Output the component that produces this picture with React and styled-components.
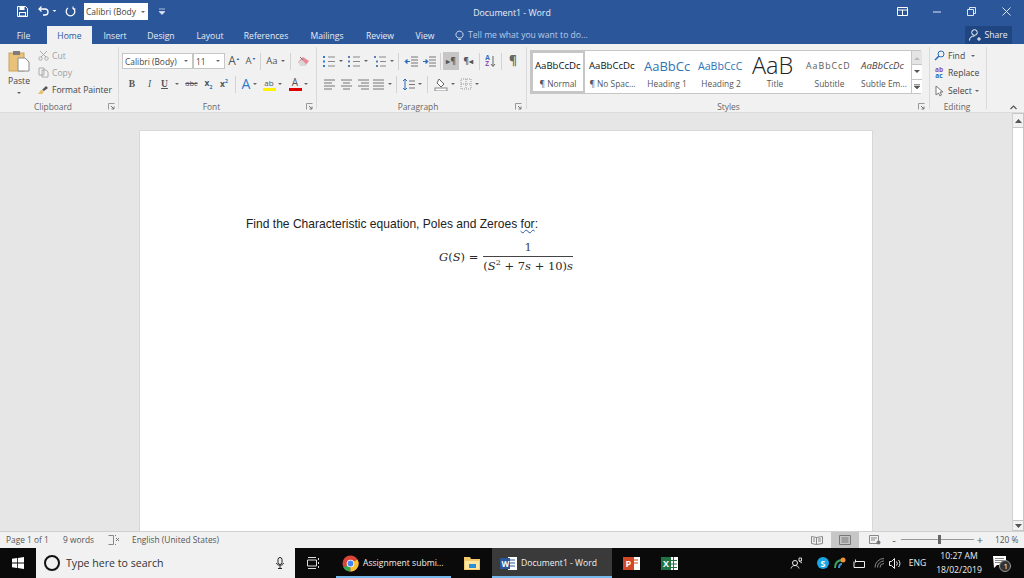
import React from "react";
import styled, { createGlobalStyle } from "styled-components";

const Global = createGlobalStyle`
  html, body { margin: 0; padding: 0; height: 100%; overflow: hidden; }
  body { font-family: "Open Sans", "Noto Sans", sans-serif; color: #444; }
  svg { display: block; }
`;

const Screen = styled.div`width: 1024px; height: 578px; display: flex; flex-direction: column; overflow: hidden; background: #e6e6e6;`;
const Header = styled.header`height: 44px; background: #2b579a; color: #fff; display: flex; flex-direction: column; flex: none;`;
const TitleRow = styled.div`height: 22px; display: flex; align-items: center; position: relative;`;
const QatSlot = styled.div`width: ${p => p.$w}px; display: flex; justify-content: center; align-items: center; flex: none;`;
const QatFont = styled.div`width: 64px; height: 17px; margin-top: 1px; background: #fff; color: #444; font-size: 8.5px; display: flex; align-items: center; justify-content: space-between; padding: 0 3px 0 2px; box-sizing: border-box; white-space: nowrap;`;
const DocTitle = styled.div`flex: 1; text-align: center; font-size: 8.8px; color: #e8eef7; margin-left: -37px; padding-top: 3px;`;
const WinControls = styled.div`display: flex; flex: none; width: 139px;`;
const WinBtn = styled.div`width: 35px; display: flex; justify-content: center;`;
const TabRow = styled.nav`height: 22px; display: flex; align-items: flex-end;`;
const Tab = styled.div`
  width: ${p => p.$w}px; height: 18px; flex: none; display: flex; align-items: center; justify-content: center;
  font-size: 8.6px; box-sizing: border-box; padding-top: 1px;
  background: ${p => p.$active ? "#f1f1f1" : "transparent"};
  color: ${p => p.$active ? "#2b579a" : "#e6ecf5"};
`;
const TellMe = styled.div`margin-left: 7px; height: 18px; display: flex; align-items: center; gap: 4px; font-size: 8.6px; color: #b9cce6; flex: 1;`;
const Share = styled.div`width: 47px; height: 18px; margin-right: 12px; background: #1f4680; display: flex; align-items: center; justify-content: center; gap: 3px; font-size: 8.6px; color: #e8eef7; flex: none;`;

const Ribbon = styled.section`height: 69px; background: #f1f1f1; display: flex; border-bottom: 1px solid #dcdcdc; box-sizing: border-box; flex: none;`;
const Group = styled.div`
  width: ${p => p.$w}px; flex: none; box-sizing: border-box; display: flex; flex-direction: column; position: relative;
  padding-left: ${p => p.$pl || 0}px;
  &::after { content: ""; position: absolute; right: 0; top: 3px; bottom: 3px; width: 1px; background: #dadada; }
`;
const GroupBody = styled.div`height: ${p => p.$h ?? 55}px; display: flex; flex-direction: column; flex: none;`;
const GroupLabel = styled.div`flex: 1; display: flex; align-items: center; justify-content: center; font-size: 8.4px; color: #666; margin-top: 1px; padding-right: ${p => p.$pr || 0}px;`;
const Launcher = styled.div`position: absolute; right: ${p => p.$r ?? 4}px; bottom: 2px;`;

const ClipRow = styled.div`display: flex; height: 55px;`;
const PasteCol = styled.div`width: 37px; flex: none; display: flex; flex-direction: column; align-items: center; padding-top: 6px; box-sizing: border-box; font-size: 8.6px; color: #444; padding-left: 1px;`;
const PasteLabel = styled.div`margin: 4px 0 5px; line-height: 11px;`;
const SmallCol = styled.div`display: flex; flex-direction: column; padding-top: 3px;`;
const SmallBtn = styled.div`height: 17.5px; display: flex; align-items: center; gap: 3px; font-size: 8.6px; white-space: nowrap; color: ${p => p.$dim ? "#a0a0a0" : "#444"};`;
const IconBox = styled.span`width: ${p => p.$w || 12}px; display: flex; justify-content: center; flex: none;`;

const ToolRow = styled.div`display: flex; align-items: center; height: ${p => p.$h}px; margin-top: ${p => p.$mt || 0}px;`;
const Slot = styled.div`
  width: ${p => p.$w}px; height: 18px; flex: none; display: flex; align-items: center; justify-content: center;
  background: ${p => p.$on ? "#c6c6c6" : "transparent"}; font-size: 9px; color: #444;
`;
const Divider = styled.div`width: 1px; height: 17px; background: #d2d2d2; flex: none; margin: 0 ${p => p.$m ?? 2}px;`;
const Caret = styled.span`width: 0; height: 0; border: 2px solid transparent; border-top: 2.5px solid #666; border-bottom: 0; display: inline-block; margin-left: ${p => p.$ml ?? 3}px; flex: none;`;
const Combo = styled.div`
  width: ${p => p.$w}px; height: 16px; background: #fff; border: 1px solid #c6c6c6; box-sizing: border-box; flex: none;
  display: flex; align-items: center; justify-content: space-between; padding: 0 4px 0 2px; font-size: 8.4px; color: #444; white-space: nowrap;
`;
const Letter = styled.span`
  font-family: "Liberation Serif", serif; font-size: ${p => p.$fs || 10}px;
  font-weight: ${p => p.$b ? 700 : 400}; font-style: ${p => p.$i ? "italic" : "normal"};
  text-decoration: ${p => p.$u ? "underline" : "none"}; color: #555;
`;
const Sans = styled.span`font-size: ${p => p.$fs || 9}px; font-weight: ${p => p.$b ? 700 : 400}; color: ${p => p.$c || "#555"}; text-decoration: ${p => p.$s ? "line-through" : "none"}; line-height: 1; white-space: nowrap;`;
const SubMark = styled.sub`font-size: 5px; color: #2b6cb8;`;
const SupMark = styled.sup`font-size: 5px; color: #2b6cb8;`;
const Swatched = styled.span`display: flex; flex-direction: column; align-items: center; width: 14px; flex: none; font-size: ${p => p.$fs}px; line-height: 9px; height: 13px; color: #555; overflow: visible;`;
const Swatch = styled.i`display: block; width: 13px; height: 3px; margin-top: 1px; background: ${p => p.$c}; flex: none;`;
const Stack = styled.span`display: flex; flex-direction: column; line-height: 6px; font-size: ${p => p.$fs}px; font-weight: 700; height: 12px; align-items: ${p => p.$align || "flex-start"}; flex: none;`;
const StackA = styled.span`color: ${p => p.$c}; height: 6px; line-height: 6px;`;

const Gallery = styled.div`margin: 6px 0 0 1px; width: 391px; height: 44px; display: flex; box-sizing: border-box; border: 1px solid #c6c6c6; background: #fff; flex: none;`;
const StyleItem = styled.div`
  width: ${p => p.$w}px; flex: none; box-sizing: border-box; overflow: hidden; display: flex; flex-direction: column; align-items: center;
  border: ${p => p.$sel ? "2.5px solid #c6c6c6" : "2.5px solid transparent"};
`;
const StylePreview = styled.div`
  height: 24px; width: 100%; overflow: hidden; display: flex; align-items: center; justify-content: flex-start; white-space: nowrap; box-sizing: border-box; padding: 2px 0 0 2px;
  font-family: "Open Sans", sans-serif; font-size: ${p => p.$fs}px; color: ${p => p.$c}; font-style: ${p => p.$i ? "italic" : "normal"};
  font-weight: ${p => p.$light ? 300 : 400}; letter-spacing: ${p => p.$ls || 0}px; line-height: 1;
`;
const StyleName = styled.div`font-size: 8.4px; color: #555; white-space: nowrap; line-height: 11px; margin-top: 1px;`;
const GalleryScroll = styled.div`margin-left: auto; width: 10px; flex: none; display: flex; flex-direction: column; border-left: 1px solid #c6c6c6;`;
const ScrollCell = styled.div`flex: 1; display: flex; align-items: center; justify-content: center; background: ${p => p.$dim ? "#e4e4e4" : "#fff"}; & + & { border-top: 1px solid #c6c6c6; }`;

const Collapse = styled.div`flex: 1; position: relative;`;
const CollapseIcon = styled.div`position: absolute; right: 7px; bottom: 2px;`;

const Work = styled.main`flex: 1; min-height: 0; display: flex; background: #e6e6e6;`;
const Canvas = styled.div`flex: 1; display: flex; padding: 17px 0 0 139px; box-sizing: border-box; overflow: hidden;`;
const Page = styled.article`width: 734px; height: 420px; background: #fff; border: 1px solid #d8d8d8; box-sizing: border-box; padding: 86px 106px 0; flex: none;`;
const DocLine = styled.p`margin: 0; font-family: "Liberation Sans", Arial, sans-serif; font-size: 12.05px; line-height: 15px; color: #222; white-space: nowrap;`;
const Squiggle = styled.span`text-decoration: underline wavy #2b579a 0.7px; text-underline-offset: 1px;`;
const Equation = styled.div`display: flex; justify-content: center; align-items: center; gap: 5px; margin-top: 8px; font-family: "DejaVu Serif", serif; font-size: 11.5px; color: #2a2a2a;`;
const Frac = styled.div`display: flex; flex-direction: column; align-items: center;`;
const Num = styled.div`height: 16px; width: 100%; text-align: center; border-bottom: 1px solid #444; line-height: 14px; margin-bottom: 2px; font-size: 11.5px; color: #444; box-sizing: content-box;`;
const Den = styled.div`line-height: 15px; white-space: nowrap;`;
const MathI = styled.i`font-style: italic;`;
const Sup = styled.sup`font-size: 8px; line-height: 0;`;

const Scrollbar = styled.aside`width: 12px; flex: none; display: flex; flex-direction: column; background: #f1f1f1; border-left: 1px solid #d0d0d0; box-sizing: border-box;`;
const ScrollBtn = styled.div`height: ${p => p.$h}px; flex: none; display: flex; align-items: center; justify-content: center; background: #f1f1f1; border: 1px solid #c6c6c6; border-left: 0; box-sizing: border-box;`;
const ScrollThumb = styled.div`flex: 1; background: #fff; border-right: 1px solid #c6c6c6; box-sizing: border-box;`;

const Status = styled.footer`height: 17px; flex: none; background: #f1f1f1; border-top: 1px solid #d0d0d0; box-sizing: border-box; display: flex; align-items: center; font-size: 8.4px; color: #555; padding: 0 0 1px 6px; white-space: nowrap;`;
const StatusText = styled.span`width: ${p => p.$w}px; flex: none;`;
const StatusSpacer = styled.div`flex: 1;`;
const ViewBtn = styled.div`width: ${p => p.$w}px; height: 16px; flex: none; display: flex; align-items: center; justify-content: center; background: ${p => p.$on ? "#c6c6c6" : "transparent"};`;
const Zoomer = styled.div`width: 73px; height: 1px; background: #999; position: relative; margin: 0 2px 0 3px; flex: none;`;
const ZoomThumb = styled.div`position: absolute; left: 37px; top: -4px; width: 3px; height: 9px; background: #666;`;
const ZoomSign = styled.span`font-size: 11px; color: #555; line-height: 1; width: 8px; text-align: center; flex: none;`;
const ZoomPct = styled.span`width: 29px; margin-left: 11px; flex: none;`;

const Taskbar = styled.footer`height: 30px; flex: none; background: #0a0a0a; display: flex; align-items: stretch; color: #fff; padding-right: 7px;`;
const StartBtn = styled.div`width: 36px; flex: none; display: flex; align-items: center; justify-content: center;`;
const Search = styled.div`width: 259px; flex: none; background: #f1f1f1; display: flex; align-items: center; padding: 0 11px 0 8px; box-sizing: border-box; color: #333; font-family: "Open Sans", sans-serif; font-size: 10.6px; gap: 6px;`;
const Ring = styled.span`width: 16px; height: 16px; border-radius: 50%; border: 2.5px solid #111; box-sizing: border-box; flex: none;`;
const SearchText = styled.span`flex: 1;`;
const TaskIcon = styled.div`width: ${p => p.$w}px; flex: none; display: flex; align-items: center; justify-content: center; box-sizing: border-box;`;
const TaskApp = styled.div`
  width: ${p => p.$w}px; flex: none; display: flex; align-items: center; gap: 4px; box-sizing: border-box; padding-left: ${p => p.$pl || 5}px;
  font-size: 8.6px; color: #f0f0f0; white-space: nowrap; position: relative; margin-left: ${p => p.$ml || 0}px;
  background: ${p => p.$active ? "#3a3a3a" : "transparent"};
  &::after { content: ""; position: absolute; left: 0; right: 0; bottom: 0; height: 2px; background: #76b9ed; }
`;
const TaskSpacer = styled.div`flex: 1;`;
const Lang = styled.div`width: 27px; flex: none; display: flex; align-items: center; justify-content: center; font-size: 8.6px; color: #eee;`;
const Clock = styled.div`width: 56px; flex: none; display: flex; flex-direction: column; align-items: center; justify-content: center; font-size: 8.6px; line-height: 14px; color: #eee; white-space: nowrap;`;

const S = ({ w = 12, h = 12, vb, children }) => <svg width={w} height={h} viewBox={vb || `0 0 ${w} ${h}`} fill="none">{children}</svg>;
const Launch = () => <S w={7} h={7}><path d="M.5.5h6M.5.5v6" stroke="#999" /><path d="M3 3l3 3M6 3.5V6H3.5" stroke="#777" /></S>;
const Lines = ({ a = ["1 2 12 2", "1 5 9 5", "1 8 12 8", "1 11 9 11"], c = "#777" }) => (
  <S w={13} h={12}>{a.map((l, i) => { const [x1, y1, x2, y2] = l.split(" "); return <line key={i} x1={x1} y1={y1} x2={x2} y2={y2} stroke={c} />; })}</S>
);
const ListIcon = ({ kind }) => (
  <S w={14} h={13}>
    {[2, 6.5, 11].map((y, i) => <React.Fragment key={y}>
      <rect x={kind === 2 && i ? 3 : 1} y={y - 1} width="2" height="2" fill={kind === 1 ? "#2b7cd3" : "#5a7fb0"} />
      <line x1={kind === 2 && i ? 7 : 6} y1={y} x2="13" y2={y} stroke="#888" />
    </React.Fragment>)}
  </S>
);
const Indent = ({ dir }) => (
  <S w={15} h={11}>
    <path d="M7 1h7M7 4h7M7 7h7M7 10h7" stroke="#777" />
    {dir ? <path d="M1 5.5h3M4 3.5l2 2-2 2z" stroke="#2b6cb8" fill="#2b6cb8" /> : <path d="M6 5.5H3M3 3.5l-2 2 2 2z" stroke="#2b6cb8" fill="#2b6cb8" />}
  </S>
);

function Ribbons() {
  return (
    <Ribbon>
      <Group $w={119}>
        <GroupBody>
          <ClipRow>
            <PasteCol>
              <S w={22} h={22}>
                <rect x="1" y="3" width="15" height="18" fill="#e9c27a" stroke="#c9a25c" />
                <rect x="5" y="1" width="7" height="4" fill="#7c7c7c" />
                <path d="M10 8h7l4 4v9H10z" fill="#fff" stroke="#8c8c8c" />
              </S>
              <PasteLabel>Paste</PasteLabel>
              <Caret $ml={0} />
            </PasteCol>
            <SmallCol>
              <SmallBtn $dim><IconBox><S w={11} h={11}><path d="M2 1l6 6M9 1L3 7" stroke="#aaa" /><circle cx="2.5" cy="8.5" r="1.7" stroke="#aaa" /><circle cx="8.5" cy="8.5" r="1.7" stroke="#aaa" /></S></IconBox>Cut</SmallBtn>
              <SmallBtn $dim><IconBox><S w={11} h={11}><path d="M1 1h5v7H1zM4 3h4l2 2v5H4z" stroke="#aaa" fill="#f5f5f5" /></S></IconBox>Copy</SmallBtn>
              <SmallBtn><IconBox><S w={12} h={10}><path d="M1 9l3-4 3 2-2 2z" fill="#e8c06a" /><path d="M5 5l4-4 2 2-4 3z" fill="#555" /></S></IconBox>Format Painter</SmallBtn>
            </SmallCol>
          </ClipRow>
        </GroupBody>
        <GroupLabel $pr={13}>Clipboard</GroupLabel>
        <Launcher><Launch /></Launcher>
      </Group>

      <Group $w={198} $pl={3}>
        <GroupBody>
          <ToolRow $h={18} $mt={8}>
            <Combo $w={71}>Calibri (Body)<Caret /></Combo>
            <Combo $w={32}>11<Caret /></Combo>
            <Slot $w={18}><Sans $fs={12}>A</Sans><S w={4} h={8}><path d="M.5 3L2 1l1.5 2z" fill="#2b6cb8" /></S></Slot>
            <Slot $w={15}><Sans $fs={9.5}>A</Sans><S w={4} h={8}><path d="M.5 1L2 3l1.5-2z" fill="#2b6cb8" /></S></Slot>
            <Divider />
            <Slot $w={25}><Sans $fs={9.5}>Aa</Sans><Caret /></Slot>
            <Divider />
            <Slot $w={20}><S w={13} h={12}><path d="M1 7l5-5 6 4-4 5H4z" fill="#e88a9a" /><path d="M1 7l3 4h4l1-2-4-4z" fill="#d9d9d9" /><path d="M3 2l3 3" stroke="#777" /></S></Slot>
          </ToolRow>
          <ToolRow $h={18} $mt={5}>
            <Slot $w={20}><Letter $b $fs={9.5}>B</Letter></Slot>
            <Slot $w={15}><Letter $i $fs={9.5}>I</Letter></Slot>
            <Slot $w={15}><Letter $u $b $fs={9.5}>U</Letter></Slot>
            <Slot $w={10}><Caret $ml={0} /></Slot>
            <Slot $w={19}><Sans $fs={7.5} $s>abc</Sans></Slot>
            <Slot $w={15}><Sans $fs={8.5} $b>x<SubMark>2</SubMark></Sans></Slot>
            <Slot $w={16}><Sans $fs={8.5} $b>x<SupMark>2</SupMark></Sans></Slot>
            <Divider $m={3} />
            <Slot $w={21}><Sans $fs={14} $c="#2b7cd3">A</Sans><Caret /></Slot>
            <Slot $w={1} />
            <Slot $w={22}><Swatched $fs={8}>ab<Swatch $c="#fff200" /></Swatched><Caret $ml={2} /></Slot>
            <Slot $w={4} />
            <Slot $w={22}><Swatched $fs={10}>A<Swatch $c="#e00000" /></Swatched><Caret $ml={2} /></Slot>
          </ToolRow>
        </GroupBody>
        <GroupLabel $pr={16}>Font</GroupLabel>
        <Launcher><Launch /></Launcher>
      </Group>

      <Group $w={210} $pl={4}>
        <GroupBody>
          <ToolRow $h={18} $mt={8}>
            <Slot $w={22}><ListIcon kind={1} /><Caret /></Slot>
            <Slot $w={3} />
            <Slot $w={22}><ListIcon kind={0} /><Caret /></Slot>
            <Slot $w={3} />
            <Slot $w={24}><ListIcon kind={2} /><Caret /></Slot>
            <Divider $m={3} />
            <Slot $w={18}><Indent /></Slot>
            <Slot $w={18}><Indent dir /></Slot>
            <Divider $m={2} />
            <Slot $w={16} $on><Sans $fs={8} $b>▸¶</Sans></Slot>
            <Slot $w={18}><Sans $fs={8} $b>¶◂</Sans></Slot>
            <Divider $m={2} />
            <Slot $w={17}>
              <Stack $fs={6.5}><StackA $c="#2b6cb8">A</StackA><StackA $c="#8a4fb0">Z</StackA></Stack>
              <S w={6} h={13}><path d="M3 1v10M1 9l2 2.5L5 9" stroke="#666" /></S>
            </Slot>
            <Divider $m={2} />
            <Slot $w={18}><Sans $fs={12} $b $c="#666">¶</Sans></Slot>
          </ToolRow>
          <ToolRow $h={18} $mt={5}>
            <Slot $w={17}><Lines /></Slot>
            <Slot $w={17}><Lines a={["1 2 12 2", "3 5 10 5", "1 8 12 8", "3 11 10 11"]} /></Slot>
            <Slot $w={16}><Lines a={["1 2 12 2", "4 5 12 5", "1 8 12 8", "4 11 12 11"]} /></Slot>
            <Slot $w={22}><Lines a={["1 2 12 2", "1 5 12 5", "1 8 12 8", "1 11 12 11"]} /><Caret /></Slot>
            <Divider $m={3} />
            <Slot $w={24}><S w={13} h={13}><path d="M3 1v11M1 3l2-2 2 2M1 10l2 2 2-2" stroke="#2b6cb8" /><path d="M7 3h6M7 6.5h6M7 10h6" stroke="#777" /></S><Caret /></Slot>
            <Divider $m={3} />
            <Slot $w={26}><S w={14} h={13}><path d="M5 1l5 5-3 3-4-4z" fill="#fff" stroke="#666" /><rect x="1" y="10" width="12" height="3" fill="#fff" stroke="#888" /></S><Caret /></Slot>
            <Slot $w={24}><S w={12} h={12}><path d="M1 1h10v10H1zM6 1v10M1 6h10" stroke="#999" strokeDasharray="1 1" /></S><Caret /></Slot>
          </ToolRow>
        </GroupBody>
        <GroupLabel $pr={12}>Paragraph</GroupLabel>
        <Launcher $r={5}><Launch /></Launcher>
      </Group>

      <Group $w={403} $pl={2}>
        <Gallery>
          <StyleItem $w={54} $sel>
            <StylePreview $fs={9.6} $c="#111">AaBbCcDc</StylePreview>
            <StyleName>¶ Normal</StyleName>
          </StyleItem>
          <StyleItem $w={55}>
            <StylePreview $fs={9.6} $c="#111">AaBbCcDc</StylePreview>
            <StyleName>¶ No Spac...</StyleName>
          </StyleItem>
          <StyleItem $w={54}>
            <StylePreview $fs={13} $c="#2e74b5">AaBbCc</StylePreview>
            <StyleName>Heading 1</StyleName>
          </StyleItem>
          <StyleItem $w={54}>
            <StylePreview $fs={10.6} $c="#2e74b5">AaBbCcC</StylePreview>
            <StyleName>Heading 2</StyleName>
          </StyleItem>
          <StyleItem $w={54}>
            <StylePreview $fs={23.5} $c="#222" $light>AaB</StylePreview>
            <StyleName>Title</StyleName>
          </StyleItem>
          <StyleItem $w={55}>
            <StylePreview $fs={8.8} $c="#5a5a5a" $ls={1}>AaBbCcD</StylePreview>
            <StyleName>Subtitle</StyleName>
          </StyleItem>
          <StyleItem $w={54}>
            <StylePreview $fs={9.6} $c="#444" $i>AaBbCcDc</StylePreview>
            <StyleName>Subtle Em...</StyleName>
          </StyleItem>
          <GalleryScroll>
            <ScrollCell $dim><S w={6} h={4}><path d="M0 4l3-3 3 3z" fill="#bbb" /></S></ScrollCell>
            <ScrollCell><S w={6} h={4}><path d="M0 0l3 3 3-3z" fill="#555" /></S></ScrollCell>
            <ScrollCell><S w={6} h={5}><path d="M0 .5h6M0 2l3 3 3-3z" stroke="#555" strokeWidth=".6" fill="#555" /></S></ScrollCell>
          </GalleryScroll>
        </Gallery>
        <GroupBody $h={5} />
        <GroupLabel $pr={2}>Styles</GroupLabel>
        <Launcher $r={5}><Launch /></Launcher>
      </Group>

      <Group $w={57} $pl={3}>
        <GroupBody>
          <SmallCol>
            <SmallBtn><IconBox><S w={11} h={11}><circle cx="7" cy="4" r="3" stroke="#2b6cb8" /><path d="M5 6L1 10" stroke="#2b6cb8" strokeWidth="1.6" /></S></IconBox>Find<Caret $ml={3} /></SmallBtn>
            <SmallBtn><IconBox><Stack $fs={6.5} $align="center"><StackA $c="#8a4fb0">ab</StackA><StackA $c="#2b6cb8">ac</StackA></Stack></IconBox>Replace</SmallBtn>
            <SmallBtn><IconBox><S w={10} h={12}><path d="M2 1v9l2.5-2 1.5 3 1.5-1-1.5-3H9z" stroke="#777" fill="#fff" /></S></IconBox>Select<Caret $ml={0} /></SmallBtn>
          </SmallCol>
        </GroupBody>
        <GroupLabel $pr={6}>Editing</GroupLabel>
      </Group>
      <Collapse>
        <CollapseIcon><S w={7} h={5}><path d="M.5 4L3.5 1l3 3" stroke="#555" strokeWidth="1.2" /></S></CollapseIcon>
      </Collapse>
    </Ribbon>
  );
}

export default function App() {
  return (
    <Screen>
      <Global />
      <Header>
        <TitleRow>
          <QatSlot $w={14} />
          <QatSlot $w={16}>
            <S w={11} h={11}><path d="M.5.5h8l2 2v8H.5z" stroke="#fff" /><rect x="2.5" y="1" width="5" height="3" fill="#fff" /><rect x="2.5" y="6.5" width="6" height="3.5" stroke="#fff" /></S>
          </QatSlot>
          <QatSlot $w={8} />
          <QatSlot $w={18}>
            <S w={18} h={10}><path d="M1 3h6a3 3 0 010 6H5" stroke="#fff" strokeWidth="1.3" /><path d="M3.5.5L1 3l2.5 2.5" stroke="#fff" strokeWidth="1.2" /><path d="M14.500 4l2 2 2-2z" fill="#dfe7f3" /></S>
          </QatSlot>
          <QatSlot $w={9} />
          <QatSlot $w={11}>
            <S w={11} h={11}><path d="M3 2a4.3 4.3 0 105 0" stroke="#fff" strokeWidth="1.3" /><path d="M8 .5V3h2.5" stroke="#fff" /></S>
          </QatSlot>
          <QatSlot $w={8} />
          <QatFont>Calibri (Body<Caret $ml={1} /></QatFont>
          <QatSlot $w={28}><S w={6} h={7}><path d="M0 1h6M0 3.500l3 3 3-3z" stroke="#dfe7f3" strokeWidth=".7" fill="#dfe7f3" /></S></QatSlot>
          <DocTitle>Document1 - Word</DocTitle>
          <WinControls>
            <WinBtn><S w={11} h={9}><path d="M.5.5h10v8H.5zM.5 3h10M5.5 3v5.5" stroke="#fff" /></S></WinBtn>
            <WinBtn><S w={8} h={9}><path d="M0 5h8" stroke="#dfe7f3" /></S></WinBtn>
            <WinBtn><S w={9} h={9}><path d="M.5 2.500h6v6h-6zM2.500 2.500v-2h6v6h-2" stroke="#dfe7f3" /></S></WinBtn>
            <WinBtn><S w={9} h={9}><path d="M.5.5l8 8M8.500.5l-8 8" stroke="#dfe7f3" /></S></WinBtn>
          </WinControls>
        </TitleRow>
        <TabRow>
          <Tab $w={47}>File</Tab>
          <Tab $w={45} $active>Home</Tab>
          <Tab $w={46}>Insert</Tab>
          <Tab $w={46}>Design</Tab>
          <Tab $w={52}>Layout</Tab>
          <Tab $w={60}>References</Tab>
          <Tab $w={62}>Mailings</Tab>
          <Tab $w={44}>Review</Tab>
          <Tab $w={46}>View</Tab>
          <TellMe>
            <S w={9} h={12}><path d="M3 9a3.6 3.6 0 113 0zM3 10.500h3" stroke="#c9d8ec" /></S>
            Tell me what you want to do...
          </TellMe>
          <Share>
            <S w={12} h={12}><circle cx="5.500" cy="3.500" r="2.800" stroke="#fff" /><path d="M.5 11.500c0-3 2-4.500 5-4.500M8 10h4M10 8v4" stroke="#fff" /></S>
            Share
          </Share>
        </TabRow>
      </Header>

      <Ribbons />

      <Work>
        <Canvas>
          <Page>
            <DocLine>Find the Characteristic equation, Poles and Zeroes <Squiggle>for</Squiggle>:</DocLine>
            <Equation>
              <span><MathI>G</MathI>(<MathI>S</MathI>) =</span>
              <Frac>
                <Num>1</Num>
                <Den>(<MathI>S</MathI><Sup>2</Sup> + 7<MathI>s</MathI> + 10)<MathI>s</MathI></Den>
              </Frac>
            </Equation>
          </Page>
        </Canvas>
        <Scrollbar>
          <ScrollBtn $h={15}><S w={7} h={4}><path d="M0 4l3.500-4L7 4z" fill="#555" /></S></ScrollBtn>
          <ScrollThumb />
          <ScrollBtn $h={11}><S w={7} h={4}><path d="M0 0l3.500 4L7 0z" fill="#555" /></S></ScrollBtn>
        </Scrollbar>
      </Work>

      <Status>
        <StatusText $w={57}>Page 1 of 1</StatusText>
        <StatusText $w={45}>9 words</StatusText>
        <IconBox $w={12}><S w={12} h={10}><path d="M.5.5h5v9h-5M7 .5h1M7 9.500h1" stroke="#888" /><path d="M8 3l3 3M11 3L8 6" stroke="#777" /></S></IconBox>
        <StatusText $w={12} />
        <span>English (United States)</span>
        <StatusSpacer />
        <ViewBtn $w={28}><S w={12} h={10}><path d="M.5 1.500l5 1v7l-5-1zM11.500 1.500l-6 1v7l6-1zM2 4h2M2 6h2M7 4h3M7 6h3" stroke="#888" /></S></ViewBtn>
        <ViewBtn $w={28} $on><S w={12} h={10}><path d="M.5.5h11v9H.5zM2.500 3h7M2.500 5h7M2.500 7h7" stroke="#777" /></S></ViewBtn>
        <ViewBtn $w={31}><S w={12} h={10}><path d="M.5.5h9v8H.5zM2 3h6M2 5h4" stroke="#888" /><circle cx="9.500" cy="7.500" r="2" fill="#777" /></S></ViewBtn>
        <ZoomSign>-</ZoomSign>
        <Zoomer><ZoomThumb /></Zoomer>
        <ZoomSign>+</ZoomSign>
        <ZoomPct>120 %</ZoomPct>
      </Status>

      <Taskbar>
        <StartBtn><S w={12} h={12}><path d="M0 1.700l5-.7v4.600H0zM5.800.9L12 0v5.600H5.800zM0 6.400h5V11l-5-.7zM5.800 6.400H12V12l-6.200-.9z" fill="#fff" /></S></StartBtn>
        <Search>
          <Ring />
          <SearchText>Type here to search</SearchText>
          <S w={8} h={12}><rect x="2" y="0.500" width="4" height="7" rx="2" stroke="#222" /><path d="M.5 6c0 3 7 3 7 0M4 9v2M2 11.500h4" stroke="#222" /></S>
        </Search>
        <TaskIcon $w={35}><S w={12} h={12}><path d="M1 .5h8M1 11.500h8M.5 3h9v6h-9zM11.500 1v2M11.500 5v2M11.500 9v2" stroke="#ddd" /></S></TaskIcon>
        <TaskApp $w={115} $ml={6} $pl={6}>
          <S w={17} h={17}>
            <circle cx="8.500" cy="8.500" r="8" fill="#db4437" />
            <path d="M8.500 8.500L1.500 12.500A8 8 0 0 0 8.500 16.500z" fill="#2da94f" />
            <path d="M8.500 8.500l7-4a8 8 0 0 1-7 12z" fill="#fbc02d" />
            <circle cx="8.500" cy="8.500" r="3.800" fill="#fff" />
            <circle cx="8.500" cy="8.500" r="2.900" fill="#4285f4" />
          </S>
          Assignment submi...
        </TaskApp>
        <TaskIcon $w={41}><S w={16} h={14}><path d="M0 1h6l1 2h9v11H0z" fill="#f3c969" /><rect x="1" y="5" width="14" height="8" fill="#fbe6a2" /><rect x="5" y="8" width="7" height="4" fill="#2b8fd8" /></S></TaskIcon>
        <TaskApp $w={120} $active $pl={8}>
          <S w={17} h={15}><rect x="8" y="1" width="9" height="13" fill="#fff" /><path d="M10 4h5M10 7h5M10 10h5" stroke="#2b579a" /><rect x="0" y="2" width="10" height="11" fill="#2b579a" /><text x="1.500" y="10.500" fontSize="8" fontWeight="700" fontFamily="Open Sans" fill="#fff">W</text></S>
          Document1 - Word
        </TaskApp>
        <TaskIcon $w={38}><S w={17} h={15}><rect x="8" y="1" width="9" height="13" fill="#fff" /><path d="M10 4h5M10 7h5" stroke="#d24726" /><rect x="0" y="1" width="11" height="13" fill="#d24726" /><text x="2.500" y="10.500" fontSize="9" fontWeight="700" fontFamily="Open Sans" fill="#fff">P</text></S></TaskIcon>
        <TaskIcon $w={38}><S w={17} h={15}><rect x="8" y="1" width="9" height="13" fill="#fff" /><path d="M9 4.500h7M9 8h7M9 11.500h7M12.500 1v13" stroke="#217346" /><rect x="0" y="1" width="10" height="13" fill="#217346" /><text x="2" y="10.500" fontSize="9" fontWeight="700" fontFamily="Open Sans" fill="#fff">X</text></S></TaskIcon>
        <TaskSpacer />
        <TaskIcon $w={20}><S w={13} h={12}><circle cx="5" cy="6" r="2.500" stroke="#eee" /><path d="M1 11.500c.5-2 2-3 4-3s3.500 1 4 3M9 1h2.500v3H9zM9 4l3 2" stroke="#eee" strokeWidth=".9" /></S></TaskIcon>
        <TaskIcon $w={7} />
        <TaskIcon $w={20}><S w={12} h={12}><circle cx="6" cy="6" r="6" fill="#1aa5e3" /><text x="3.500" y="9.500" fontSize="9" fontWeight="700" fontFamily="Open Sans" fill="#fff">S</text></S></TaskIcon>
        <TaskIcon $w={14}><S w={12} h={12}><path d="M1 11c0-5 3-8 8-8" stroke="#3ba55c" strokeWidth="2" /><path d="M5 11c0-2 1-4 3-4" stroke="#3a8fd8" strokeWidth="2" /><circle cx="9" cy="3" r="2.500" fill="#f0903a" /></S></TaskIcon>
        <TaskIcon $w={24}><S w={12} h={9}><path d="M3 2.500h8.500v6H1v-6M2.500.5v3" stroke="#eee" /></S></TaskIcon>
        <TaskIcon $w={16}><S w={11} h={10}><path d="M1 9.500A9 9 0 0 1 10 .5M3.500 9.500A6.500 6.500 0 0 1 10 3M6 9.500A4 4 0 0 1 10 5.500" stroke="#888" /></S></TaskIcon>
        <TaskIcon $w={17}><S w={13} h={11}><path d="M.5 3.500h2l3-3v10l-3-3h-2z" stroke="#eee" /><path d="M7.500 3.500a3 3 0 010 4M9.500 2a5 5 0 010 7" stroke="#eee" /></S></TaskIcon>
        <Lang>ENG</Lang>
        <Clock><span>10:27 AM</span><span>18/02/2019</span></Clock>
        <TaskIcon $w={30}>
          <S w={19} h={17}><path d="M0 1h13v9H4l-3 3z" fill="#fff" /><path d="M2 3.500h9M2 5.500h9M2 7.500h6" stroke="#555" strokeWidth=".7" /><circle cx="12" cy="11" r="5.500" fill="#333" stroke="#999" /><text x="10.500" y="14" fontSize="8" fontFamily="Open Sans" fill="#fff">1</text></S>
        </TaskIcon>
      </Taskbar>
    </Screen>
  );
}
